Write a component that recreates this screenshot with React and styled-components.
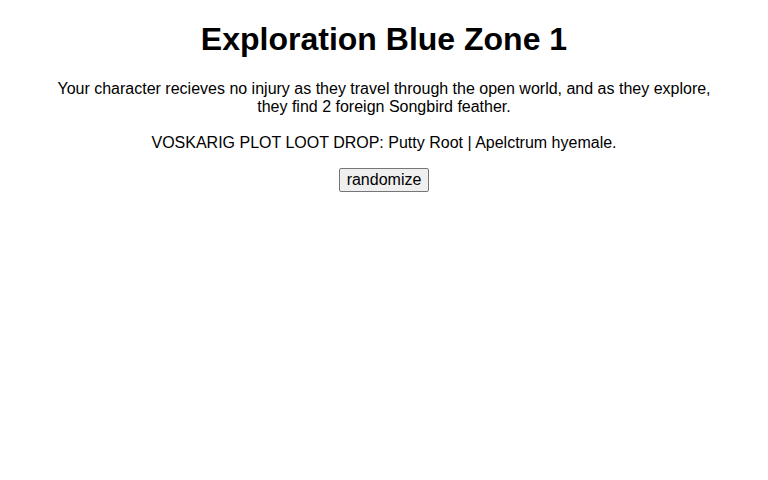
import React, {useState} from 'react';
import styled, {createGlobalStyle} from 'styled-components';

const GlobalStyle = createGlobalStyle`
  body {
    margin: 0;
    background: #ffffff;
    color: #000000;
    font-family: "Liberation Sans", Arial, sans-serif;
  }
`;

const Page = styled.div`
  text-align: center;
  padding: 0 48px;
`;

const Title = styled.h1`
  font-size: 32px;
  font-weight: bold;
  margin: 21.44px 0;
`;

const Outcome = styled.p`
  font-size: 16px;
  margin: ${props => (props.$spaced ? '18px' : '16px')} 0 16px;
`;

const RandomizeButton = styled.button`
  font-family: "Liberation Sans", Arial, sans-serif;
  font-size: 16px;
  color: #000000;
  background: #efefef;
  border: 1px solid #767676;
  border-radius: 2px;
  padding: 2px 7px;
  cursor: pointer;

  &:hover {
    background: #e5e5e5;
  }
`;

const injuries = ['no injury'];
const finds = [
  {count: 2, item: 'foreign Songbird feather'}
];
const drops = [
  {name: 'Putty Root', latin: 'Apelctrum hyemale'}
];

const App = () => {
  const [roll, setRoll] = useState(0);
  const injury = injuries[roll % injuries.length];
  const find = finds[roll % finds.length];
  const drop = drops[roll % drops.length];

  return (
    <Page>
      <GlobalStyle />
      <Title>Exploration Blue Zone 1</Title>
      <Outcome>
        Your character recieves {injury} as they travel through the open world,
        and as they explore, they find {find.count} {find.item}.
      </Outcome>
      <Outcome $spaced>
        VOSKARIG PLOT LOOT DROP: {drop.name} | {drop.latin}.
      </Outcome>
      <RandomizeButton onClick={() => setRoll(r => r + 1)}>randomize</RandomizeButton>
    </Page>
  );
};

export default App;
